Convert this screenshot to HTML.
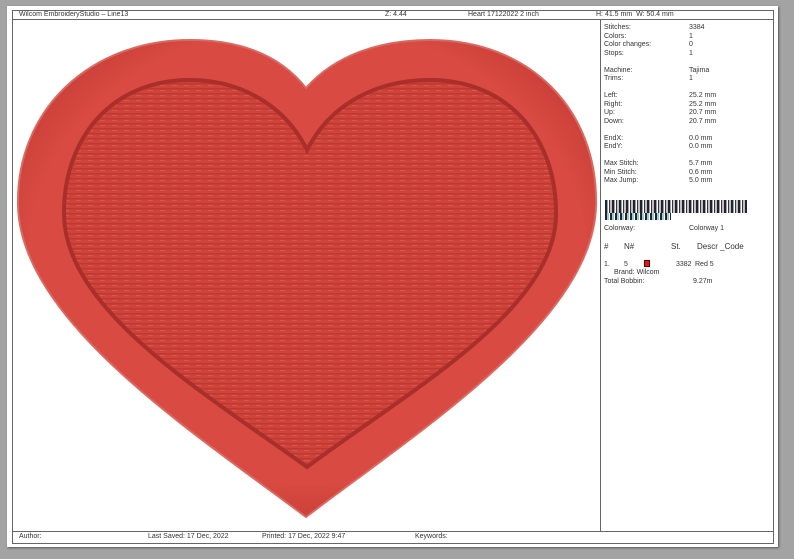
<!DOCTYPE html>
<html><head><meta charset="utf-8"><style>
*{margin:0;padding:0;box-sizing:border-box}
body{width:794px;height:559px;background:#a3a3a3;position:relative;overflow:hidden;font-family:"Liberation Sans",sans-serif;font-size:7px;color:#333}
.page{position:absolute;left:7px;top:6px;width:771px;height:541px;background:#fff;box-shadow:1px 1px 2px #555}
.frame{position:absolute;left:12px;top:10px;width:762px;height:534px;border:1px solid #666}
.hl{position:absolute;left:12px;width:762px;height:1px;background:#666}
.vl{position:absolute;left:600px;top:19px;width:1px;height:512px;background:#666}
.t{position:absolute;white-space:nowrap;line-height:8px}
</style></head><body>
<div class="page"></div>
<div class="frame"></div>
<div class="hl" style="top:19px"></div>
<div class="hl" style="top:531px"></div>
<div class="vl"></div>
<div class="t" style="left:19px;top:11px">Wilcom EmbroideryStudio – Line13</div>
<div class="t" style="left:385px;top:11px">Z: 4.44</div>
<div class="t" style="left:468px;top:11px">Heart 17122022 2 inch</div>
<div class="t" style="left:596px;top:11px">H: 41.5 mm&nbsp;&nbsp;W: 50.4 mm</div>
<div class="t" style="left:19px;top:533px">Author:</div>
<div class="t" style="left:148px;top:533px">Last Saved: 17 Dec, 2022</div>
<div class="t" style="left:262px;top:533px">Printed: 17 Dec, 2022 9:47</div>
<div class="t" style="left:415px;top:533px">Keywords:</div>
<svg style="position:absolute;left:0;top:0" width="600" height="530">
<defs>
<pattern id="p" width="12" height="5" patternUnits="userSpaceOnUse">
<rect width="12" height="5" fill="#cf433b"/>
<rect y="3" width="12" height="1.5" fill="#bd3a33"/>
<rect x="4" y="0" width="5" height="1" fill="#d9554d"/>
</pattern>
<radialGradient id="g" cx="0.5" cy="0.45" r="0.6"><stop offset="0.8" stop-color="#d84a42"/><stop offset="1" stop-color="#c23a33"/></radialGradient>
</defs>
<path d="M306,88 C280,55 240,40 190,40 C90,40 16,110 18,205 C20,320 190,430 306,517 C420,430 594,320 596,205 C598,110 530,40 430,40 C380,40 335,55 306,88 Z" fill="url(#g)" stroke="#d86a62" stroke-width="2"/>
<path d="M307,150 C285,105 240,80 190,80 C110,80 63,140 64,215 C66,310 200,390 307,467 C410,390 555,310 556,215 C557,140 510,80 430,80 C375,80 330,105 307,150 Z" fill="url(#p)" stroke="#a82f2a" stroke-width="4"/>
</svg>
<div class="t" style="left:604px;top:24px;line-height:8.5px">Stitches:<br>Colors:<br>Color changes:<br>Stops:<br><br>Machine:<br>Trims:<br><br>Left:<br>Right:<br>Up:<br>Down:<br><br>EndX:<br>EndY:<br><br>Max Stitch:<br>Min Stitch:<br>Max Jump:</div>
<div class="t" style="left:689px;top:24px;line-height:8.5px">3384<br>1<br>0<br>1<br><br>Tajima<br>1<br><br>25.2 mm<br>25.2 mm<br>20.7 mm<br>20.7 mm<br><br>0.0 mm<br>0.0 mm<br><br>5.7 mm<br>0.6 mm<br>5.0 mm</div>
<div style="position:absolute;left:605px;top:200px;width:142px;height:13px;background:repeating-linear-gradient(90deg,#223 0 2px,#8aa 2px 3px,#fff 3px 4px,#334 4px 5px,#cbb 5px 7px)"></div>
<div style="position:absolute;left:605px;top:213px;width:66px;height:7px;background:repeating-linear-gradient(90deg,#223 0 2px,#9cc 2px 4px,#fff 4px 5px)"></div>
<div class="t" style="left:604px;top:225px">Colorway:</div>
<div class="t" style="left:689px;top:225px">Colorway 1</div>
<div class="t" style="left:604px;top:243px;font-size:8px">#</div>
<div class="t" style="left:624px;top:243px;font-size:8px">N#</div>
<div class="t" style="left:671px;top:243px;font-size:8px">St.</div>
<div class="t" style="left:697px;top:243px;font-size:8px">Descr _Code</div>
<div class="t" style="left:604px;top:261px">1.</div>
<div class="t" style="left:624px;top:261px">5</div>
<div style="position:absolute;left:644px;top:260px;width:6px;height:7px;background:#d21d1d;border:1px solid #600"></div>
<div class="t" style="left:676px;top:261px">3382</div>
<div class="t" style="left:695px;top:261px">Red 5</div>
<div class="t" style="left:614px;top:269px">Brand: Wilcom</div>
<div class="t" style="left:604px;top:278px">Total Bobbin:</div>
<div class="t" style="left:693px;top:278px">9.27m</div>
</body></html>
